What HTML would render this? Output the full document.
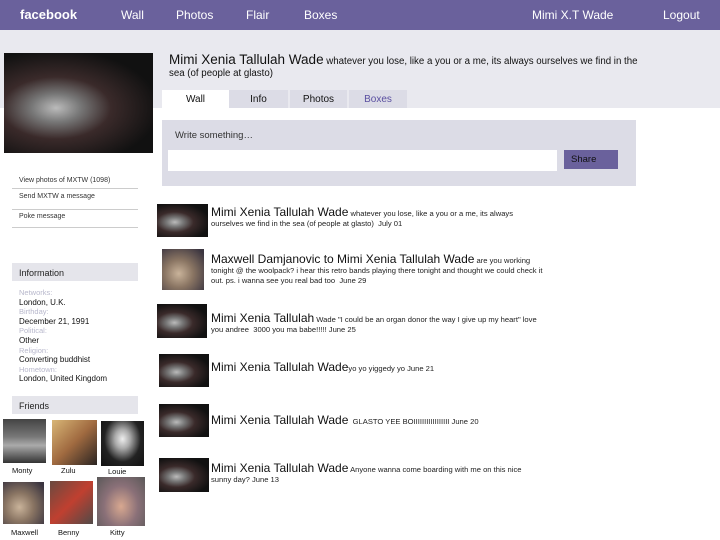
<!DOCTYPE html>
<html><head><meta charset="utf-8"><style>
*{margin:0;padding:0;box-sizing:border-box}
body{width:720px;height:540px;position:relative;overflow:hidden;background:#fff;font-family:"Liberation Sans",Arial,sans-serif;color:#111}
.a{position:absolute;white-space:nowrap}
.hd{left:0;top:0;width:720px;height:30px;background:#6a619c}
.hd span{position:absolute;top:8px;color:#fff;font-size:12px}
.band{left:0;top:30px;width:720px;height:78px;background:#e9e9ef}
.ph{position:absolute;background:radial-gradient(ellipse at 35% 55%,#bbb 0,#777 18%,#3a2a2a 40%,#111 75%)}
.ph2{background:radial-gradient(ellipse at 40% 60%,#c9b39a 0,#8a7563 40%,#3b3540 90%)}
.ph3{background:linear-gradient(135deg,#d8b676,#a06a40 50%,#2a2422)}
.ph4{background:radial-gradient(ellipse at 50% 40%,#eee 0,#aaa 25%,#222 60%,#111)}
.ph5{background:linear-gradient(180deg,#444,#777 40%,#aaa 60%,#333)}
.ph6{background:linear-gradient(135deg,#6a4a40,#c04030 50%,#504a48)}
.ph7{background:radial-gradient(ellipse at 50% 60%,#d8a890,#8a7078 50%,#5a5858)}
.tab{position:absolute;top:90px;height:18px;font-size:10px;text-align:center;line-height:19px}
.lnk{left:12px;width:126px;font-size:7px;border-bottom:1px solid #ccc;height:12px;color:#333}
.hb{left:12px;width:126px;height:18px;background:#e5e5eb;font-size:9px;padding:5px 0 0 7px;color:#222}
.lab{font-size:7.5px;color:#b8b8cc}
.val{font-size:8px;color:#111}
.fn{font-size:7.5px;color:#111}
.pt{left:211px;width:325px;white-space:normal;font-size:7.6px;line-height:10px;color:#222}
.pt b{font-weight:normal;font-size:12px;color:#111}
</style></head><body>
<div class="a hd">
<span style="left:20px;font-weight:bold;font-size:13px;top:7px">facebook</span>
<span style="left:121px">Wall</span><span style="left:176px">Photos</span><span style="left:246px">Flair</span><span style="left:304px">Boxes</span>
<span style="left:532px">Mimi X.T Wade</span><span style="left:663px">Logout</span>
</div>
<div class="a band"></div>
<div class="ph" style="left:4px;top:53px;width:149px;height:100px"></div>
<div class="a" style="left:169px;top:54px;width:486px;white-space:normal;font-size:9.7px;line-height:12px"><span style="font-size:13.5px">Mimi Xenia Tallulah Wade</span> whatever you lose, like a you or a me, its always ourselves we find in the sea (of people at glasto)</div>
<div class="tab" style="left:162px;width:67px;background:#fff">Wall</div>
<div class="tab" style="left:229px;width:59px;background:#dcdce6">Info</div>
<div class="tab" style="left:290px;width:57px;background:#dcdce6">Photos</div>
<div class="tab" style="left:349px;width:58px;background:#dcdce6;color:#5a4fa0">Boxes</div>
<div class="a" style="left:162px;top:120px;width:474px;height:66px;background:#dcdce6"></div>
<div class="a" style="left:175px;top:130px;font-size:9.5px;color:#333">Write something…</div>
<div class="a" style="left:168px;top:150px;width:389px;height:21px;background:#fff"></div>
<div class="a" style="left:564px;top:150px;width:54px;height:19px;background:#6a619c;font-size:9.5px;padding:4px 0 0 7px;color:#111">Share</div>
<div class="a lnk" style="top:177px;padding-left:7px">View photos of MXTW (1098)</div>
<div class="a lnk" style="top:193px;padding-left:7px;height:17px">Send MXTW a message</div>
<div class="a lnk" style="top:213px;padding-left:7px;height:15px">Poke message</div>
<div class="a hb" style="top:263px">Information</div>
<div class="a" style="left:19px;top:288px;line-height:9.6px">
<div class="lab">Networks:</div><div class="val">London, U.K.</div>
<div class="lab">Birthday:</div><div class="val">December 21, 1991</div>
<div class="lab">Political:</div><div class="val">Other</div>
<div class="lab">Religion:</div><div class="val">Converting buddhist</div>
<div class="lab">Hometown:</div><div class="val">London, United Kingdom</div>
</div>
<div class="a hb" style="top:396px">Friends</div>
<div class="ph ph5" style="left:3px;top:419px;width:43px;height:44px"></div>
<div class="ph ph3" style="left:52px;top:420px;width:45px;height:45px"></div>
<div class="ph ph4" style="left:101px;top:421px;width:43px;height:45px"></div>
<div class="a fn" style="left:12px;top:466px">Monty</div>
<div class="a fn" style="left:61px;top:466px">Zulu</div>
<div class="a fn" style="left:108px;top:467px">Louie</div>
<div class="ph ph2" style="left:3px;top:482px;width:41px;height:42px"></div>
<div class="ph ph6" style="left:50px;top:481px;width:43px;height:43px"></div>
<div class="ph ph7" style="left:97px;top:477px;width:48px;height:49px"></div>
<div class="a fn" style="left:11px;top:528px">Maxwell</div>
<div class="a fn" style="left:58px;top:528px">Benny</div>
<div class="a fn" style="left:110px;top:528px">Kitty</div>

<div class="ph" style="left:157px;top:204px;width:51px;height:33px"></div>
<div class="a pt" style="top:207px"><b>Mimi Xenia Tallulah Wade</b> whatever you lose, like a you or a me, its always ourselves we find in the sea (of people at glasto)&nbsp; July 01</div>
<div class="ph ph2" style="left:162px;top:249px;width:42px;height:41px"></div>
<div class="a pt" style="top:254px;width:335px"><b>Maxwell Damjanovic to Mimi Xenia Tallulah Wade</b> are you working tonight @ the woolpack? i hear this retro bands playing there tonight and thought we could check it out. ps. i wanna see you real bad too&nbsp; June 29</div>
<div class="ph" style="left:157px;top:304px;width:50px;height:34px"></div>
<div class="a pt" style="top:313px;width:330px"><b>Mimi Xenia Tallulah</b> Wade "I could be an organ donor the way I give up my heart" love you andree&nbsp; 3000 you ma babe!!!!! June 25</div>
<div class="ph" style="left:159px;top:354px;width:50px;height:33px"></div>
<div class="a pt" style="top:362px"><b>Mimi Xenia Tallulah Wade</b>yo yo yiggedy yo June 21</div>
<div class="ph" style="left:159px;top:404px;width:50px;height:33px"></div>
<div class="a pt" style="top:415px"><b>Mimi Xenia Tallulah Wade</b>&nbsp; GLASTO YEE BOIIIIIIIIIIIIIIIII June 20</div>
<div class="ph" style="left:159px;top:458px;width:50px;height:34px"></div>
<div class="a pt" style="top:463px"><b>Mimi Xenia Tallulah Wade</b> Anyone wanna come boarding with me on this nice sunny day? June 13</div>
</body></html>
